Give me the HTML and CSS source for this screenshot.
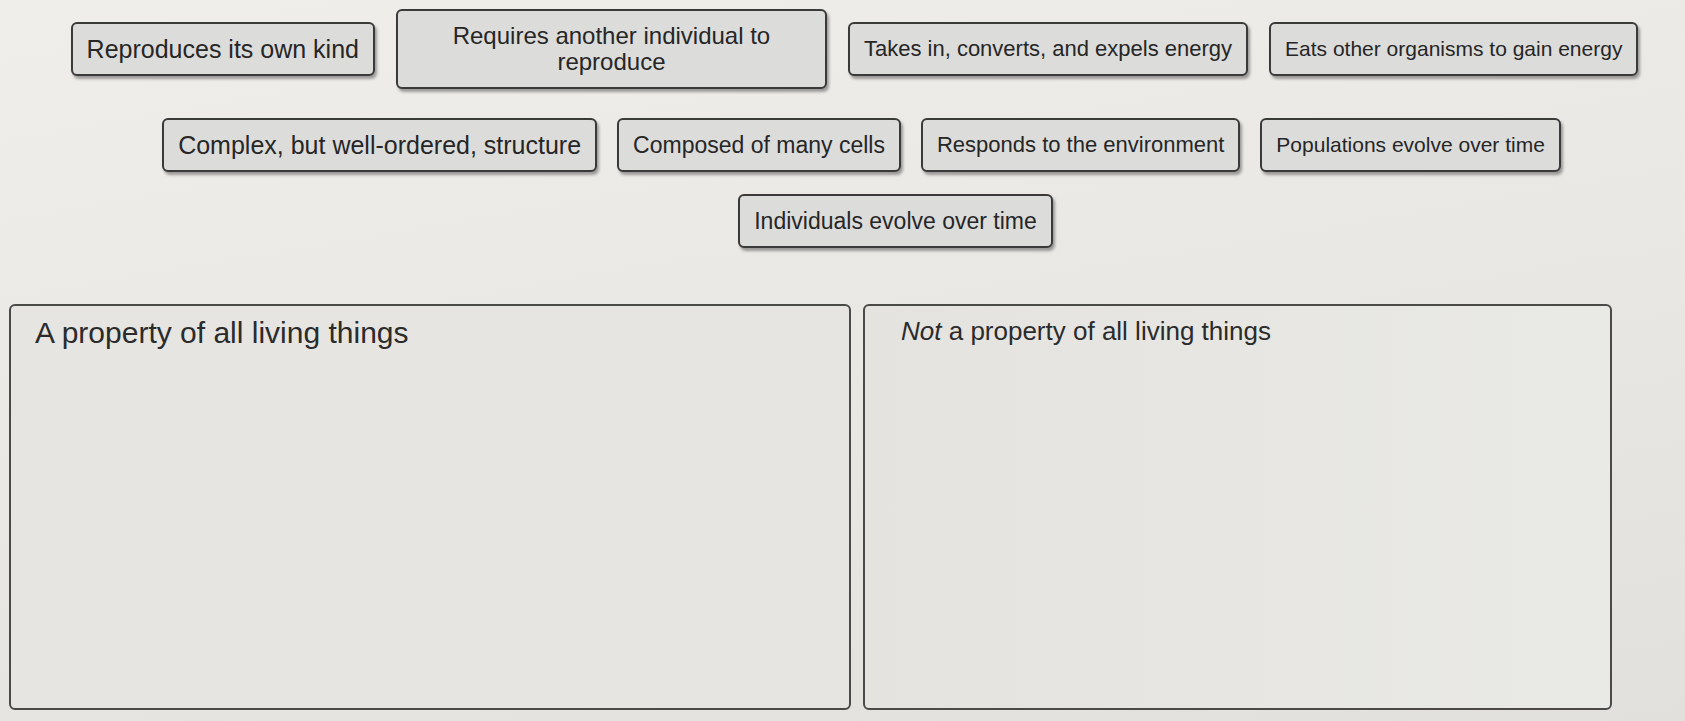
FILE: index.html
```html
<!DOCTYPE html>
<html lang="en">

<head>
  <meta charset="UTF-8">
  <meta name="viewport" content="width=device-width, initial-scale=1.0">
  <title>Properties of living things</title>
  <link rel="stylesheet" href="styles.css">
</head>

<body>

  <div class="bank">
    <div class="bank_row row_one">
      <div class="chip chip_lg">Reproduces its own kind</div>
      <div class="chip chip_wide">Requires another individual to reproduce</div>
      <div class="chip chip_sm">Takes in, converts, and expels energy</div>
      <div class="chip chip_xs">Eats other organisms to gain energy</div>
    </div>
    <div class="bank_row row_two">
      <div class="chip chip_lg">Complex, but well-ordered, structure</div>
      <div class="chip">Composed of many cells</div>
      <div class="chip chip_sm">Responds to the environment</div>
      <div class="chip chip_xs">Populations evolve over time</div>
    </div>
    <div class="bank_row row_three">
      <div class="chip">Individuals evolve over time</div>
    </div>
  </div>

  <div class="targets">
    <div class="target target_left">
      <h3>A property of all living things</h3>
    </div>
    <div class="target target_right">
      <h3><em>Not</em> a property of all living things</h3>
    </div>
  </div>

</body>

</html>
```

FILE: styles.css
```css
body {
  margin: 0;
  height: 721px;
  overflow: hidden;
  font-family: "Liberation Sans", Arial, sans-serif;
  color: #262626;
  background: linear-gradient(170deg, #efeeeb 0%, #e8e7e4 55%, #e1e0dd 100%);
}

.bank {
  display: flex;
  flex-direction: column;
  padding-top: 6px;
}

.bank_row {
  display: flex;
  justify-content: center;
  align-items: center;
}

.row_one {
  height: 86px;
  gap: 21px;
  padding-left: 24px;
}

.row_two {
  margin-top: 26px;
  gap: 20px;
  padding-left: 38px;
}

.row_three {
  margin-top: 22px;
  padding-left: 106px;
}

.chip {
  font-size: 23px;
  line-height: 26px;
  padding: 12px 14px;
  border: 2px solid #3a3a3a;
  border-radius: 6px;
  background: #dcdcdb;
  box-shadow: 2px 3px 3px rgba(0, 0, 0, 0.35);
  white-space: nowrap;
  text-align: center;
}

/* the photo is taken at an angle, the left side reads bigger */
.chip_lg {
  font-size: 25px;
}

.chip_sm {
  font-size: 22px;
}

.chip_xs {
  font-size: 21px;
}

.chip_wide {
  width: 399px;
  font-size: 24px;
  white-space: normal;
}

.targets {
  display: flex;
  gap: 12px;
  margin-top: 56px;
  padding-left: 9px;
}

.target {
  height: 406px;
  border: 2px solid #4a4a4a;
  border-radius: 6px;
  background: #e6e5e2;
  box-sizing: border-box;
}

.target_left {
  width: 842px;
}

.target_right {
  width: 749px;
  background: linear-gradient(90deg, #e4e3e0 0%, #e9e9e6 100%);
}

.target h3 {
  margin: 0;
  font-weight: normal;
  color: #2b2b2b;
}

.target_left h3 {
  font-size: 30px;
  padding: 10px 0 0 24px;
}

.target_right h3 {
  font-size: 26px;
  padding: 10px 0 0 36px;
}
```
